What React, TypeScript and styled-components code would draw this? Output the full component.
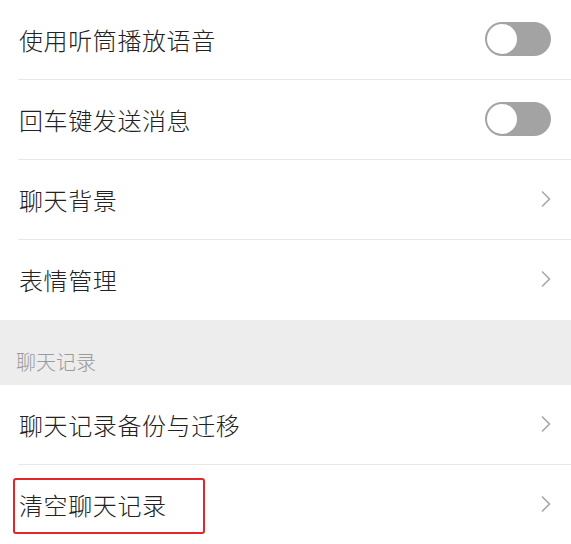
import React from 'react'
import styled, { createGlobalStyle } from 'styled-components'

const GlobalStyle = createGlobalStyle`
    body {
        margin: 0;
        background: #ffffff;
        font-family: "Noto Sans CJK SC", "Noto Sans", sans-serif;
    }
`

const Page = styled.div`
    width: 571px;
    height: 544px;
    overflow: hidden;
    background: #ffffff;
`

const Row = styled.div`
    position: relative;
    height: 80px;
    box-sizing: border-box;
    display: flex;
    align-items: center;
    justify-content: space-between;
    padding: 0 20px 2px 19px;

    &:not(:last-child)::after {
        content: '';
        position: absolute;
        left: 18px;
        right: 0;
        bottom: 0;
        height: 1px;
        background: #e8e8e8;
    }
`

const Label = styled.span`
    font-size: 24px;
    font-weight: 300;
    color: #222222;
    letter-spacing: 0.6px;
`

const SectionHeader = styled.div`
    height: 65px;
    box-sizing: border-box;
    background: #ededed;
    display: flex;
    align-items: flex-end;
    padding: 0 0 9px 16px;
    font-size: 20px;
    font-weight: 300;
    color: #9a9a9a;
`

const Track = styled.div<{ on?: boolean }>`
    width: 66px;
    height: 34px;
    border-radius: 17px;
    background: ${props => (props.on ? '#07c160' : '#a3a3a3')};
    display: flex;
    align-items: center;
    justify-content: ${props => (props.on ? 'flex-end' : 'flex-start')};
`

const Knob = styled.div`
    width: 30px;
    height: 30px;
    border-radius: 50%;
    background: #ffffff;
    margin: 0 2px;
`

const Highlight = styled.div`
    position: absolute;
    left: 13px;
    top: 13px;
    width: 192px;
    height: 56px;
    box-sizing: border-box;
    border: 2px solid #e3262a;
    border-radius: 3px;
    pointer-events: none;
`

function Chevron() {
    return (
        <svg width="12" height="18" viewBox="0 0 12 18" style={{ marginRight: -1 }}>
            <path d="M2 1.5 L9.5 9 L2 16.5" fill="none" stroke="#a8a8a8" strokeWidth="1.6" />
        </svg>
    )
}

type Item = { label: string; kind: 'toggle' | 'link'; marked?: boolean }

const general: Item[] = [
    { label: '使用听筒播放语音', kind: 'toggle' },
    { label: '回车键发送消息', kind: 'toggle' },
    { label: '聊天背景', kind: 'link' },
    { label: '表情管理', kind: 'link' },
]

const history: Item[] = [
    { label: '聊天记录备份与迁移', kind: 'link' },
    { label: '清空聊天记录', kind: 'link', marked: true },
]

function SettingRow({ item }: { item: Item }) {
    return (
        <Row>
            <Label>{item.label}</Label>
            {item.kind === 'toggle' ? (
                <Track>
                    <Knob />
                </Track>
            ) : (
                <Chevron />
            )}
            {item.marked && <Highlight />}
        </Row>
    )
}

export default function App() {
    return (
        <Page>
            <GlobalStyle />
            <div>
                {general.map(item => (
                    <SettingRow key={item.label} item={item} />
                ))}
            </div>
            <SectionHeader>聊天记录</SectionHeader>
            <div>
                {history.map(item => (
                    <SettingRow key={item.label} item={item} />
                ))}
            </div>
        </Page>
    )
}
